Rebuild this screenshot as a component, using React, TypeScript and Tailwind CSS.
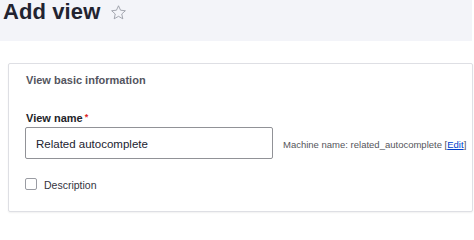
export default function App() {
  return (
    <div className="w-[474px] h-[222px] bg-white font-['Liberation_Sans',Arial,sans-serif] overflow-hidden">
      <div className="mr-[2px] h-[41px] bg-[#f3f4f9] pl-[3px] pt-[1px] flex items-start">
        <h1 className="text-[22px] leading-[22px] font-bold text-[#222330] tracking-[0.1px]">Add view</h1>
        <svg className="ml-[10px] mt-[3px]" width="17" height="17" viewBox="0 0 24 24" fill="none" stroke="#8e929c" strokeWidth="1.1" strokeLinejoin="round">
          <path d="M12 2.5l2.9 6.3 6.8.7-5.1 4.6 1.5 6.8L12 17.4l-6.1 3.5 1.5-6.8-5.1-4.6 6.8-.7z" />
        </svg>
      </div>

      <div className="ml-[8px] mr-[1px] mt-[22px] h-[149px] border border-[#dedfe4] rounded-[2px] bg-white shadow-[0_1px_2px_rgba(0,0,0,0.06)] px-[16px]">
        <h2 className="pt-[11px] ml-[1px] text-[11px] leading-[11px] font-bold text-[#545560]">View basic information</h2>

        <div className="mt-[27px] ml-[1px] flex items-start text-[11px] leading-[11px] font-bold text-[#232429]">
          View name
          <span className="ml-[2px] text-[9px] leading-[9px] text-[#dc2323]">*</span>
        </div>

        <div className="mt-[3px] flex items-center">
          <div className="shrink-0 w-[248px] h-[32px] border border-[#919297] rounded-[2px] pl-[10px] flex items-center">
            <span className="mt-[2px] text-[11.5px] leading-[12px] text-[#222330]">Related autocomplete</span>
          </div>
          <span className="ml-[10px] mt-[3px] text-[9.5px] leading-[10px] text-[#55565b] whitespace-nowrap">
            Machine name: related_autocomplete [<a className="text-[#003ecc] underline">Edit</a>]
          </span>
        </div>

        <label className="mt-[19px] flex items-center">
          <span className="w-[12px] h-[12px] border border-[#9a9ca3] rounded-[2px] bg-white" />
          <span className="ml-[7px] mt-[1px] text-[10.5px] leading-[10px] text-[#333440]">Description</span>
        </label>
      </div>
    </div>
  );
}
